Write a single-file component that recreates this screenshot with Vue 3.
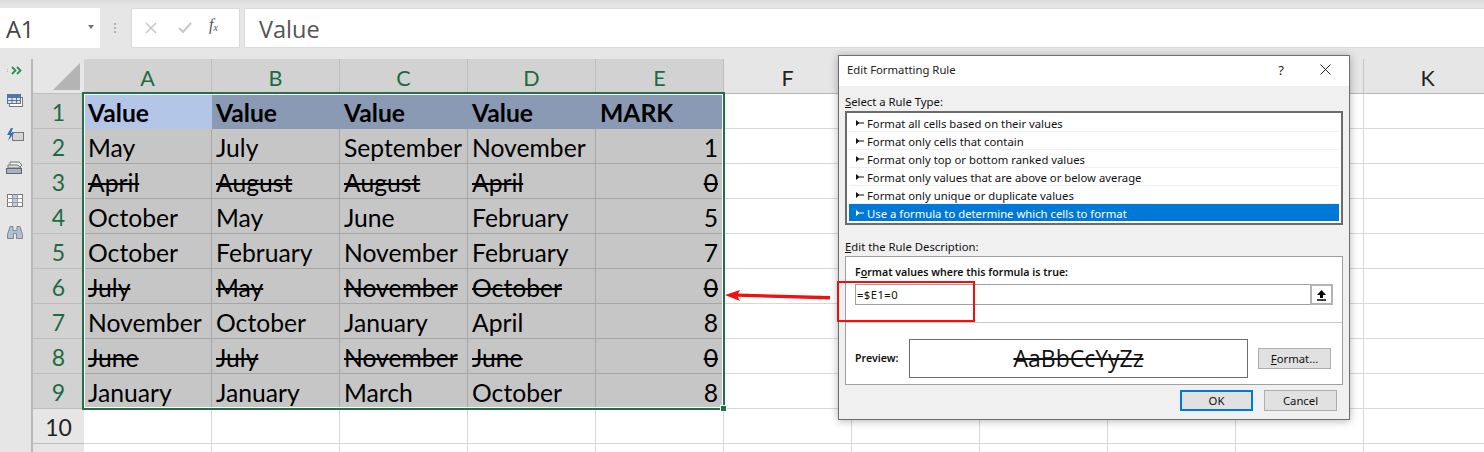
<script setup>
const cols = ['A','B','C','D','E','F','','','','','K']
const rows = [
  { v: ['Value','Value','Value','Value','MARK'], head: true },
  { v: ['May','July','September','November',1] },
  { v: ['April','August','August','April',0], s: true },
  { v: ['October','May','June','February',5] },
  { v: ['October','February','November','February',7] },
  { v: ['July','May','November','October',0], s: true },
  { v: ['November','October','January','April',8] },
  { v: ['June','July','November','June',0], s: true },
  { v: ['January','January','March','October',8] },
]
const rules = [
  'Format all cells based on their values',
  'Format only cells that contain',
  'Format only top or bottom ranked values',
  'Format only values that are above or below average',
  'Format only unique or duplicate values',
  'Use a formula to determine which cells to format',
]
const blanks = [6,7,8,9,10,11]
</script>

<template>
  <div class="app">
    <div class="fbar">
      <div class="namebox"><span>A1</span><i class="caret"></i></div>
      <div class="grip"><b></b><b></b><b></b></div>
      <div class="fbtns">
        <svg width="12" height="12" viewBox="0 0 12 12"><path d="M1 1l10 10M11 1L1 11" stroke="#c8c8c8" stroke-width="1.6" fill="none"/></svg>
        <svg width="14" height="12" viewBox="0 0 14 12"><path d="M1 6l4 4 8-9" stroke="#c8c8c8" stroke-width="2" fill="none"/></svg>
        <span class="fx">f<sub>x</sub></span>
      </div>
      <div class="finput">Value</div>
    </div>

    <div class="main">
      <div class="side">
        <svg class="chev" width="15" height="9" viewBox="0 0 15 9"><path d="M0 3h1v1H0zM0 5h1v1H0z" fill="#bbb"/><path d="M5 1l3.500 3.500L5 8M10 1l3.500 3.500L10 8" stroke="#2e8b57" stroke-width="1.8" fill="none"/></svg>
        <svg width="16" height="13" viewBox="0 0 16 13"><rect x="2.5" y="3.5" width="13" height="9" fill="#fff" stroke="#777"/><rect x="0.5" y="0.5" width="13" height="9" fill="#dfe4ec" stroke="#5f7391"/><path d="M0 1h14v3H0z" fill="#4a76b8"/><path d="M5 0v10M9.500 0v10M0 6.500h14" stroke="#5f7391"/></svg>
        <svg width="18" height="14" viewBox="0 0 18 14"><rect x="6.500" y="4.500" width="11" height="8" fill="#d5d5d5" stroke="#777"/><path d="M5 0L1 7h3l-2 6 6-8H5l2-5z" fill="#2f6fc0"/></svg>
        <svg width="17" height="14" viewBox="0 0 17 14"><path d="M4 1h9l3 3-2 2H4z" fill="#eee" stroke="#777"/><path d="M2 4h10l3 3H2z" fill="#ddd" stroke="#777"/><rect x="0.500" y="7.500" width="15" height="5" fill="#a9b2c2" stroke="#666"/></svg>
        <svg width="16" height="13" viewBox="0 0 16 13"><rect x="0.500" y="0.500" width="15" height="12" fill="#fff" stroke="#777"/><rect x="5" y="1" width="5" height="11" fill="#b9cde6"/><path d="M5.500 0v13M10.500 0v13M0 4.500h16M0 8.500h16" stroke="#999"/></svg>
        <svg width="16" height="13" viewBox="0 0 16 13"><path d="M3 .500h3v4h4v-4h3l2.500 8v4h-6v-5h-3v5h-6v-4z" fill="#b4bfd0" stroke="#75808f" stroke-width=".9"/></svg>
      </div>

      <div class="sheet">
        <div class="colrow">
          <div class="corner"><i></i></div>
          <div v-for="(c,i) in cols" :key="i" class="colh" :class="{ sel: i < 5 }">{{ c }}</div>
        </div>
        <div v-for="(r,ri) in rows" :key="ri" class="row">
          <div class="rowh sel">{{ ri + 1 }}</div>
          <div v-for="(v,ci) in r.v" :key="ci" class="cell shade"
            :class="{ head: r.head, first: r.head && ci === 0, num: typeof v === 'number', strike: r.s }">{{ v }}</div>
          <div v-for="b in blanks" :key="b" class="cell"></div>
        </div>
        <div v-for="n in [10,11]" :key="n" class="row">
          <div class="rowh">{{ n === 10 ? 10 : '' }}</div>
          <div v-for="(c,i) in cols" :key="i" class="cell"></div>
        </div>
        <div class="selection"><i class="handle"></i></div>
      </div>
    </div>

    <div class="dialog">
      <div class="dtitle">
        <span>Edit Formatting Rule</span>
        <span class="q">?</span>
        <svg width="11" height="11" viewBox="0 0 11 11"><path d="M.5.500l10 10M10.500.500l-10 10" stroke="#222" fill="none"/></svg>
      </div>
      <div class="dbody">
        <div class="lbl"><u>S</u>elect a Rule Type:</div>
        <div class="list">
          <div v-for="(r,i) in rules" :key="r" class="rule" :class="{ on: i === 5 }">
            <svg class="mark" width="8" height="6" viewBox="0 0 8 6"><path d="M0 0L3 2.400H8V3.600H3L0 6z" fill="currentColor"/></svg>
            <span>{{ r }}</span>
          </div>
        </div>
        <div class="lbl second"><u>E</u>dit the Rule Description:</div>
        <div class="desc">
          <div class="top">
            <div class="bold">F<u>o</u>rmat values where this formula is true:</div>
            <div class="input">
              <span>=$E1=0</span>
              <div class="upbtn"><svg width="11" height="12" viewBox="0 0 11 12"><path d="M5.500 1L10 6H7v3H4V6H1z" fill="#000"/><path d="M1 11h9" stroke="#000" stroke-width="1.500"/></svg></div>
            </div>
          </div>
          <div class="prev">
            <span class="bold plabel">Preview:</span>
            <div class="pbox">AaBbCcYyZz</div>
            <div class="btn fmt"><u>F</u>ormat...</div>
          </div>
        </div>
        <div class="actions">
          <div class="btn ok">OK</div>
          <div class="btn">Cancel</div>
        </div>
      </div>
    </div>

    <div class="redbox"></div>
    <svg class="arrow" width="110" height="16" viewBox="0 0 110 16">
      <path d="M13 5.500L106 8L106 11.500L13 8.800z" fill="#f01010"/>
      <path d="M1 7L16 2L13 7.500L16 13z" fill="#f01010"/>
    </svg>
  </div>
</template>

<style>
html, body { margin: 0; background: #fff; overflow: hidden; }
</style>

<style scoped>
.app { position: relative; width: 1484px; height: 452px; overflow: hidden; font-family: "Lato", "Liberation Sans", sans-serif; background: #fff; }
.fbar { height: 59px; box-sizing: border-box; padding: 8px 0 11px; display: flex; background: linear-gradient(#dcdcdc 0, #e6e6e6 6px); }
.namebox { width: 100px; background: #fff; display: flex; align-items: center; justify-content: space-between; padding: 2px 6px 0 6px; box-sizing: border-box; font: 24px "Open Sans", sans-serif; color: #444; }
.namebox span { font-size: 23.500px; }
.caret { width: 0; height: 0; border: 3.5px solid transparent; border-top: 4px solid #777; border-bottom: 0; margin-bottom: 4px; }
.grip { width: 31px; display: flex; flex-direction: column; align-items: center; justify-content: center; gap: 2px; }
.grip b { width: 2px; height: 2px; background: #b0b0b0; margin-left: -1px; }
.fbtns { width: 109px; background: #fff; border: 1px solid #dadada; box-sizing: border-box; display: flex; align-items: center; gap: 21px; padding-left: 13px; color: #666; }
.fx { font: italic 16px "Liberation Serif", serif; color: #555; margin-left: -4px; margin-top: -6px; }
.fx sub { font-size: 10px; vertical-align: -1px; }
.finput { margin-left: 4px; flex: 1; background: #fff; border: 1px solid #dadada; border-right: 0; box-sizing: border-box; padding: 2px 0 0 14px; display: flex; align-items: center; font: 23.500px "Open Sans", sans-serif; color: #555; }

.main { display: flex; height: 393px; }
.side { width: 33px; flex: none; box-sizing: border-box; background: #e6e6e6; border-right: 2px solid #b8b8b8; display: flex; flex-direction: column; align-items: center; padding-top: 7px; padding-right: 2px; }
.side svg { margin-bottom: 19px; }
.side svg:nth-child(2) { margin-bottom: 21px; }

.sheet { position: relative; flex: 1; min-width: 0; display: flex; flex-direction: column; }
.colrow, .row { display: flex; flex: none; }
.colrow { height: 35px; }
.row { height: 35px; }
.corner { width: 51px; flex: none; background: #e6e6e6; box-sizing: border-box; border-bottom: 1px solid #c0c0c0; position: relative; }
.corner i { position: absolute; right: 4px; bottom: 3px; border-style: solid; border-width: 0 0 27px 27px; border-color: transparent transparent #b4b4b4 transparent; }
.colh { width: 128px; flex: none; box-sizing: border-box; background: #e6e6e6; border-right: 1px solid #c4c4c4; border-bottom: 1px solid #b8b8b8; text-align: center; font-size: 21.500px; line-height: 38px; color: #222; }
.colh.sel { background: #d2d2d2; color: #1d6b43; border-right-color: #bdbdbd; }
.rowh { width: 51px; flex: none; box-sizing: border-box; background: #e6e6e6; border-bottom: 1px solid #bdbdbd; text-align: center; font-size: 23px; line-height: 37px; color: #222; }
.rowh.sel { background: #d2d2d2; color: #1d6b43; }
.cell { width: 128px; flex: none; box-sizing: border-box; border-right: 1px solid #d8d8d8; border-bottom: 1px solid #d8d8d8; font-size: 24.700px; line-height: 37px; padding-left: 4px; color: #000; white-space: nowrap; overflow: hidden; }
.cell.shade { background: #c6c6c6; border-color: #a6a6a6; }
.cell.head { background: #8a9ab4; font-weight: 700; border-color: #8a9ab4; }
.cell.first { background: #b4c6e7; border-color: #b4c6e7; }
.cell.num { text-align: right; padding: 0 5px 0 0; }
.cell.strike { text-decoration: line-through; }
.selection { position: absolute; left: 49px; top: 33px; width: 643px; height: 318px; box-sizing: border-box; border: 2px solid #1f7246; box-shadow: inset 0 0 0 1px #fff; pointer-events: none; }
.handle { position: absolute; right: -4px; bottom: -4px; width: 5px; height: 5px; background: #1f7246; border: 1px solid #fff; }

.dialog { position: absolute; left: 838px; top: 55px; width: 512px; height: 365px; box-sizing: border-box; border: 1px solid #6e6e6e; background: #f0f0f0; box-shadow: 0 1px 8px rgba(0,0,0,.3); font: 11.300px "Noto Sans", "Open Sans", sans-serif; color: #111; display: flex; flex-direction: column; }
.dtitle { height: 30px; flex: none; box-sizing: border-box; background: #fff; display: flex; align-items: center; padding: 0 18px 3px 8px; font-size: 11.300px; color: #222; }
.dtitle span:first-child { flex: 1; }
.q { margin-right: 36px; font-size: 13px; }
.dbody { flex: 1; padding: 8px 7px 0 6px; display: flex; flex-direction: column; }
.lbl { height: 16px; line-height: 16px; }
.list { margin-top: 1px; height: 114px; box-sizing: border-box; border: 2px solid #6b6b6b; padding: 1px 2px 0; background: #fff; width: 498px; }
.rule { height: 18px; box-sizing: border-box; border-bottom: 1px solid #f0f0f0; padding: 1px 0 0 7px; white-space: nowrap; display: flex; align-items: center; gap: 3px; }
.rule.on { background: #0078d7; color: #fff; border-bottom: 0; height: 17px; }
.mark { flex: none; }
.second { margin-top: 14px; }
.desc { margin-top: 1px; width: 498px; height: 129px; box-sizing: border-box; border: 1px solid #a0a0a0; background: #fff; display: flex; flex-direction: column; }
.top { height: 66px; box-sizing: border-box; border-bottom: 1px solid #c8c8c8; padding: 8px 9px 0; }
.bold { font-weight: 600; font-size: 10.600px; }
.input { margin-top: 5px; height: 21px; box-sizing: border-box; border: 1px solid #a0a0a0; display: flex; align-items: center; justify-content: space-between; padding-left: 1px; letter-spacing: .4px; }
.upbtn { width: 23px; height: 21px; box-sizing: border-box; margin-right: -1px; background: #fff; border: 2px solid #b4b4b4; display: flex; align-items: center; justify-content: center; }
.prev { flex: 1; display: flex; align-items: center; padding: 9px 11px 0 9px; }
.plabel { width: 54px; }
.pbox { width: 339px; height: 39px; box-sizing: border-box; border: 1px solid #6d6d6d; text-align: center; font: 23px/37px "Open Sans", sans-serif; text-decoration: line-through; color: #111; }
.btn { width: 73px; height: 21px; box-sizing: border-box; background: #e1e1e1; border: 1px solid #adadad; text-align: center; line-height: 19px; }
.fmt { margin-left: 10px; }
.actions { display: flex; justify-content: flex-end; gap: 11px; margin-top: 5px; padding-right: 5px; }
.ok { border: 2px solid #0078d7; line-height: 17px; }

.redbox { position: absolute; left: 837px; top: 281px; width: 138px; height: 41px; box-sizing: border-box; border: 2px solid #f01010; }
.arrow { position: absolute; left: 724px; top: 288px; }
</style>
